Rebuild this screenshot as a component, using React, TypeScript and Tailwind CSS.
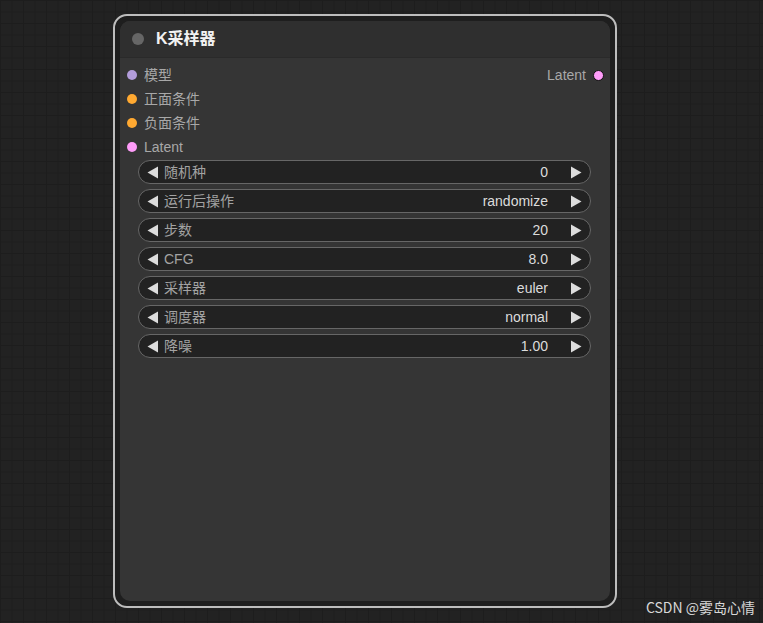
import React from 'react';

const FONT = "font-['Liberation_Sans','Noto_Sans_CJK_SC',sans-serif]";

const inputs = [
  { label: '模型', color: 'bg-[#b39ddb]' },
  { label: '正面条件', color: 'bg-[#ffa931]' },
  { label: '负面条件', color: 'bg-[#ffa931]' },
  { label: 'Latent', color: 'bg-[#ff9cf9]' },
];

const widgets = [
  { label: '随机种', value: '0' },
  { label: '运行后操作', value: 'randomize' },
  { label: '步数', value: '20' },
  { label: 'CFG', value: '8.0' },
  { label: '采样器', value: 'euler' },
  { label: '调度器', value: 'normal' },
  { label: '降噪', value: '1.00' },
];

function Arrow({ dir }: { dir: 'left' | 'right' }) {
  return (
    <svg width="12" height="13" viewBox="0 0 12 13" className="shrink-0">
      {dir === 'left' ? (
        <polygon points="11,0.5 11,12.5 0.5,6.5" fill="#dddddd" />
      ) : (
        <polygon points="1,0.5 1,12.5 11.5,6.5" fill="#dddddd" />
      )}
    </svg>
  );
}

function Widget({ label, value }: { label: string; value: string }) {
  return (
    <div className="flex items-center h-[24px] rounded-full border border-[#676767] bg-[#222222] pl-[8px] pr-[8px] text-[14px]">
      <Arrow dir="left" />
      <span className="ml-[5px] text-[#a3a3a3]">{label}</span>
      <span className="ml-auto text-[#dcdcdc]">{value}</span>
      <span className="ml-[22px]">
        <Arrow dir="right" />
      </span>
    </div>
  );
}

export default function App() {
  return (
    <div
      className={`${FONT} relative w-[763px] h-[623px] overflow-hidden bg-[#222222] bg-[linear-gradient(to_right,#1d1d1d_1px,transparent_1px),linear-gradient(to_bottom,#1d1d1d_1px,transparent_1px)] bg-[size:11.5px_11.5px] pl-[113px] pt-[14px]`}
    >
      <div className="w-[504px] h-[594px] rounded-[14px] border-2 border-[#bdbdbd] bg-[#1e1e1e] p-[5px]">
        <div className="h-full rounded-[10px] bg-[#353535] overflow-hidden flex flex-col">
          <div className="h-[37px] shrink-0 flex items-center bg-[#2f2f2f] border-b border-[#2a2a2a] pl-[12px]">
            <span className="w-[12px] h-[12px] rounded-full bg-[#666666]" />
            <span className="ml-[12px] text-[16px] font-bold text-[#f2f2f2]">K采样器</span>
          </div>

          <div className="flex pt-[5px]">
            <div className="flex flex-col flex-1">
              {inputs.map((inp) => (
                <div key={inp.label} className="h-[24px] flex items-center pl-[7px]">
                  <span className={`w-[10px] h-[10px] rounded-full ${inp.color}`} />
                  <span className="ml-[7px] text-[14px] text-[#a8a8a8]">{inp.label}</span>
                </div>
              ))}
            </div>
            <div className="h-[24px] flex items-center pr-[6px]">
              <span className="text-[14px] text-[#a8a8a8]">Latent</span>
              <span className="ml-[7px] w-[11px] h-[11px] rounded-full bg-[#ff9cf9] border border-[#111111]" />
            </div>
          </div>

          <div className="flex flex-col gap-[5px] pl-[18px] pr-[19px] pt-[1px]">
            {widgets.map((w) => (
              <Widget key={w.label} label={w.label} value={w.value} />
            ))}
          </div>
        </div>
      </div>

      <div className="absolute right-[8px] bottom-[5px] text-[14px] text-[#d8d8d8] font-['Noto_Sans_CJK_SC',sans-serif]">
        CSDN @雾岛心情
      </div>
    </div>
  );
}
